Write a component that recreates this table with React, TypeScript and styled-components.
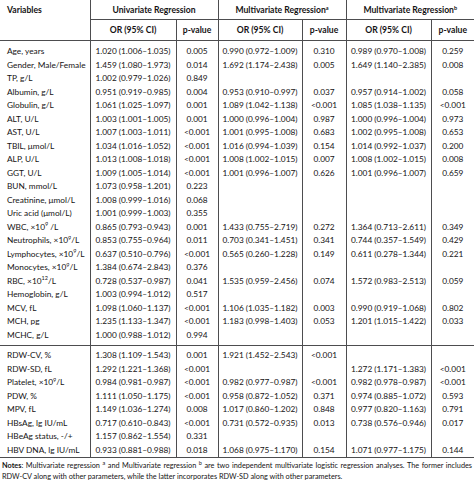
import React from "react";
import styled, { createGlobalStyle } from "styled-components";

const GlobalStyle = createGlobalStyle`
  html, body {
    margin: 0;
    padding: 0;
    background: #ffffff;
  }
  body {
    font-family: Lato, "Liberation Sans", sans-serif;
    color: #151314;
  }
`;

const LINE = "#4d4d4f";

const Page = styled.div`
  width: 474px;
  height: 486px;
  overflow: hidden;
`;

const Table = styled.table`
  width: 474px;
  border-collapse: collapse;
  table-layout: fixed;
`;

const VarHead = styled.th`
  padding: 2px 0 0 7px;
  line-height: 17px;
  font-size: 8.6px;
  font-weight: 700;
  text-align: left;
  vertical-align: top;
  border-bottom: 1px solid ${LINE};
`;

const GroupHead = styled.th`
  padding: 2px 0 0 0;
  line-height: 17px;
  font-size: 8.6px;
  font-weight: 700;
  text-align: center;
  white-space: nowrap;
  border-left: 1px solid ${LINE};
  border-bottom: 1px solid ${LINE};
`;

const SubHead = styled.th`
  padding: 0;
  line-height: 20px;
  font-size: 8.6px;
  font-weight: 700;
  text-align: center;
  white-space: nowrap;
  border-left: 1px solid ${LINE};
  border-bottom: 1px solid ${LINE};
`;

const Cell = styled.td<{ $label?: boolean; $top?: number; $bottom?: number; $rule?: boolean }>`
  padding: ${(p) => p.$top ?? 0}px 0 ${(p) => p.$bottom ?? 0}px ${(p) => (p.$label ? 7 : 0)}px;
  line-height: 13.5px;
  font-size: 8.3px;
  white-space: nowrap;
  text-align: ${(p) => (p.$label ? "left" : "center")};
  border-left: ${(p) => (p.$label ? "none" : `1px solid ${LINE}`)};
  border-bottom: ${(p) => (p.$rule ? `1px solid ${LINE}` : "none")};
`;

const Sup = styled.sup`
  font-size: 5.5px;
  line-height: 0;
  vertical-align: baseline;
  position: relative;
  top: -3.2px;
`;

const Notes = styled.div`
  padding: 2px 2px 0 2px;
  font-size: 7.3px;
  line-height: 11px;
`;

const NoteLine = styled.div<{ $fill?: boolean }>`
  white-space: nowrap;
  text-align: justify;
  text-align-last: ${(p) => (p.$fill ? "justify" : "left")};
`;

type Row = [React.ReactNode, string, string, string, string, string, string];

const x9 = (
  <>
    ×10<Sup>9</Sup>/L
  </>
);

const rows: Row[] = [
  ["Age, years", "1.020 (1.006–1.035)", "0.005", "0.990 (0.972–1.009)", "0.310", "0.989 (0.970–1.008)", "0.259"],
  ["Gender, Male/Female", "1.459 (1.080–1.973)", "0.014", "1.692 (1.174–2.438)", "0.005", "1.649 (1.140–2.385)", "0.008"],
  ["TP, g/L", "1.002 (0.979–1.026)", "0.849", "", "", "", ""],
  ["Albumin, g/L", "0.951 (0.919–0.985)", "0.004", "0.953 (0.910–0.997)", "0.037", "0.957 (0.914–1.002)", "0.058"],
  ["Globulin, g/L", "1.061 (1.025–1.097)", "0.001", "1.089 (1.042–1.138)", "<0.001", "1.085 (1.038–1.135)", "<0.001"],
  ["ALT, U/L", "1.003 (1.001–1.005)", "0.001", "1.000 (0.996–1.004)", "0.987", "1.000 (0.996–1.004)", "0.973"],
  ["AST, U/L", "1.007 (1.003–1.011)", "<0.001", "1.001 (0.995–1.008)", "0.683", "1.002 (0.995–1.008)", "0.653"],
  ["TBIL, μmol/L", "1.034 (1.016–1.052)", "<0.001", "1.016 (0.994–1.039)", "0.154", "1.014 (0.992–1.037)", "0.200"],
  ["ALP, U/L", "1.013 (1.008–1.018)", "<0.001", "1.008 (1.002–1.015)", "0.007", "1.008 (1.002–1.015)", "0.008"],
  ["GGT, U/L", "1.009 (1.005–1.014)", "<0.001", "1.001 (0.996–1.007)", "0.626", "1.001 (0.996–1.007)", "0.659"],
  ["BUN, mmol/L", "1.073 (0.958–1.201)", "0.223", "", "", "", ""],
  ["Creatinine, μmol/L", "1.008 (0.999–1.016)", "0.068", "", "", "", ""],
  ["Uric acid (μmol/L)", "1.001 (0.999–1.003)", "0.355", "", "", "", ""],
  [<>WBC, ×10<Sup>9</Sup> /L</>, "0.865 (0.793–0.943)", "0.001", "1.433 (0.755–2.719)", "0.272", "1.364 (0.713–2.611)", "0.349"],
  [<>Neutrophils, {x9}</>, "0.853 (0.755–0.964)", "0.011", "0.703 (0.341–1.451)", "0.341", "0.744 (0.357–1.549)", "0.429"],
  [<>Lymphocytes, {x9}</>, "0.637 (0.510–0.796)", "<0.001", "0.565 (0.260–1.228)", "0.149", "0.611 (0.278–1.344)", "0.221"],
  [<>Monocytes, {x9}</>, "1.384 (0.674–2.843)", "0.376", "", "", "", ""],
  [<>RBC, ×10<Sup>12</Sup>/L</>, "0.728 (0.537–0.987)", "0.041", "1.535 (0.959–2.456)", "0.074", "1.572 (0.983–2.513)", "0.059"],
  ["Hemoglobin, g/L", "1.003 (0.994–1.012)", "0.517", "", "", "", ""],
  ["MCV, fL", "1.098 (1.060–1.137)", "<0.001", "1.106 (1.035–1.182)", "0.003", "0.990 (0.919–1.068)", "0.802"],
  ["MCH, pg", "1.235 (1.133–1.347)", "<0.001", "1.183 (0.998–1.403)", "0.053", "1.201 (1.015–1.422)", "0.033"],
  ["MCHC, g/L", "1.000 (0.988–1.012)", "0.994", "", "", "", ""],
  ["RDW-CV, %", "1.308 (1.109–1.543)", "0.001", "1.921 (1.452–2.543)", "<0.001", "", ""],
  ["RDW-SD, fL", "1.292 (1.221–1.368)", "<0.001", "", "", "1.272 (1.171–1.383)", "<0.001"],
  [<>Platelet, {x9}</>, "0.984 (0.981–0.987)", "<0.001", "0.982 (0.977–0.987)", "<0.001", "0.982 (0.978–0.987)", "<0.001"],
  ["PDW, %", "1.111 (1.050–1.175)", "<0.001", "0.958 (0.872–1.052)", "0.371", "0.974 (0.885–1.072)", "0.593"],
  ["MPV, fL", "1.149 (1.036–1.274)", "0.008", "1.017 (0.860–1.202)", "0.848", "0.977 (0.820–1.163)", "0.791"],
  ["HBsAg, lg IU/mL", "0.717 (0.610–0.843)", "<0.001", "0.731 (0.572–0.935)", "0.013", "0.738 (0.576–0.946)", "0.017"],
  ["HBeAg status, -/+", "1.157 (0.862–1.554)", "0.331", "", "", "", ""],
  ["HBV DNA, lg IU/mL", "0.933 (0.881–0.988)", "0.018", "1.068 (0.975–1.170)", "0.154", "1.071 (0.977–1.175)", "0.144"],
];

const SECTION_END = 21;

const App = () => {
  return (
    <Page>
      <GlobalStyle />
      <Table>
        <colgroup>
          <col style={{ width: 90 }} />
          <col style={{ width: 86 }} />
          <col style={{ width: 42 }} />
          <col style={{ width: 84 }} />
          <col style={{ width: 44 }} />
          <col style={{ width: 85 }} />
          <col style={{ width: 43 }} />
        </colgroup>
        <thead>
          <tr>
            <VarHead rowSpan={2}>Variables</VarHead>
            <GroupHead colSpan={2}>Univariate Regression</GroupHead>
            <GroupHead colSpan={2}>
              Multivariate Regression<Sup>a</Sup>
            </GroupHead>
            <GroupHead colSpan={2}>
              Multivariate Regression<Sup>b</Sup>
            </GroupHead>
          </tr>
          <tr>
            <SubHead>OR (95% CI)</SubHead>
            <SubHead>p-value</SubHead>
            <SubHead>OR (95% CI)</SubHead>
            <SubHead>p-value</SubHead>
            <SubHead>OR (95% CI)</SubHead>
            <SubHead>p-value</SubHead>
          </tr>
        </thead>
        <tbody>
          {rows.map((row, i) => {
            const last = i === rows.length - 1;
            const top = i === 0 ? 4 : i === SECTION_END + 1 ? 3 : 0;
            const bottom = i === SECTION_END ? 3 : 0;
            const rule = i === SECTION_END || last;
            return (
              <tr key={i}>
                {row.map((value, j) => (
                  <Cell key={j} $label={j === 0} $top={top} $bottom={bottom} $rule={rule}>
                    {value}
                  </Cell>
                ))}
              </tr>
            );
          })}
        </tbody>
      </Table>
      <Notes>
        <NoteLine $fill>
          <b>Notes</b>: Multivariate regression <Sup>a</Sup> and Multivariate regression <Sup>b</Sup> are two
          independent multivariate logistic regression analyses. The former includes
        </NoteLine>
        <NoteLine>RDW-CV along with other parameters, while the latter incorporates RDW-SD along with other parameters.</NoteLine>
      </Notes>
    </Page>
  );
};

export default App;
